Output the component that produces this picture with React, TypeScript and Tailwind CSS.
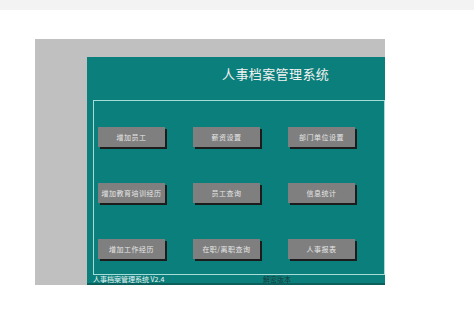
import React from 'react';

const FONT = { fontFamily: '"Noto Sans CJK SC", "Noto Sans", sans-serif' };

const rows: string[][] = [
    ['增加员工', '薪资设置', '部门单位设置'],
    ['增加教育培训经历', '员工查询', '信息统计'],
    ['增加工作经历', '在职/离职查询', '人事报表'],
];

const MenuButton: React.FC<{ label: string }> = ({ label }) => (
    <button className="w-[67px] h-[20px] bg-[#7f7f7f] text-[#e6e6e6] text-[7px] leading-none flex items-center justify-center shadow-[2px_2px_0_#1c1c1c] tracking-[0.5px]">
        {label}
    </button>
);

export default function App() {
    return (
        <div className="w-[474px] h-[335px] bg-white flex flex-col" style={FONT}>
            <div className="h-[10px] bg-[#f3f3f3]" />
            <div className="pt-[29px] pl-[35px]">
                <div className="w-[350px] h-[246px] bg-[#c0c0c0] pl-[52px] pt-[18px] flex">
                    <div className="w-[298px] flex-1 bg-[#0b7f7b] flex flex-col">
                        <div className="h-[43px] pl-[135px] pt-[8px]">
                            <h1 className="text-[13px] leading-[17px] text-[#f2f2f2] tracking-[0.4px]">人事档案管理系统</h1>
                        </div>
                        <div className="ml-[6px] h-[175px] border border-[#a8dcd8] pl-[4px] pt-[26px]">
                            <div className="grid grid-cols-[67px_67px_67px] gap-x-[28px] gap-y-[36px]">
                                {rows.flat().map(label => (
                                    <MenuButton key={label} label={label} />
                                ))}
                            </div>
                        </div>
                        <div className="flex-1 flex items-center pl-[6px] border-b-2 border-[#0c5f5b]">
                            <span className="w-[170px] text-[7px] leading-none text-[#eef6f5]">人事档案管理系统 V2.4</span>
                            <span className="text-[7px] leading-none text-[#163c3a]">解密版本</span>
                        </div>
                    </div>
                </div>
            </div>
        </div>
    );
}
